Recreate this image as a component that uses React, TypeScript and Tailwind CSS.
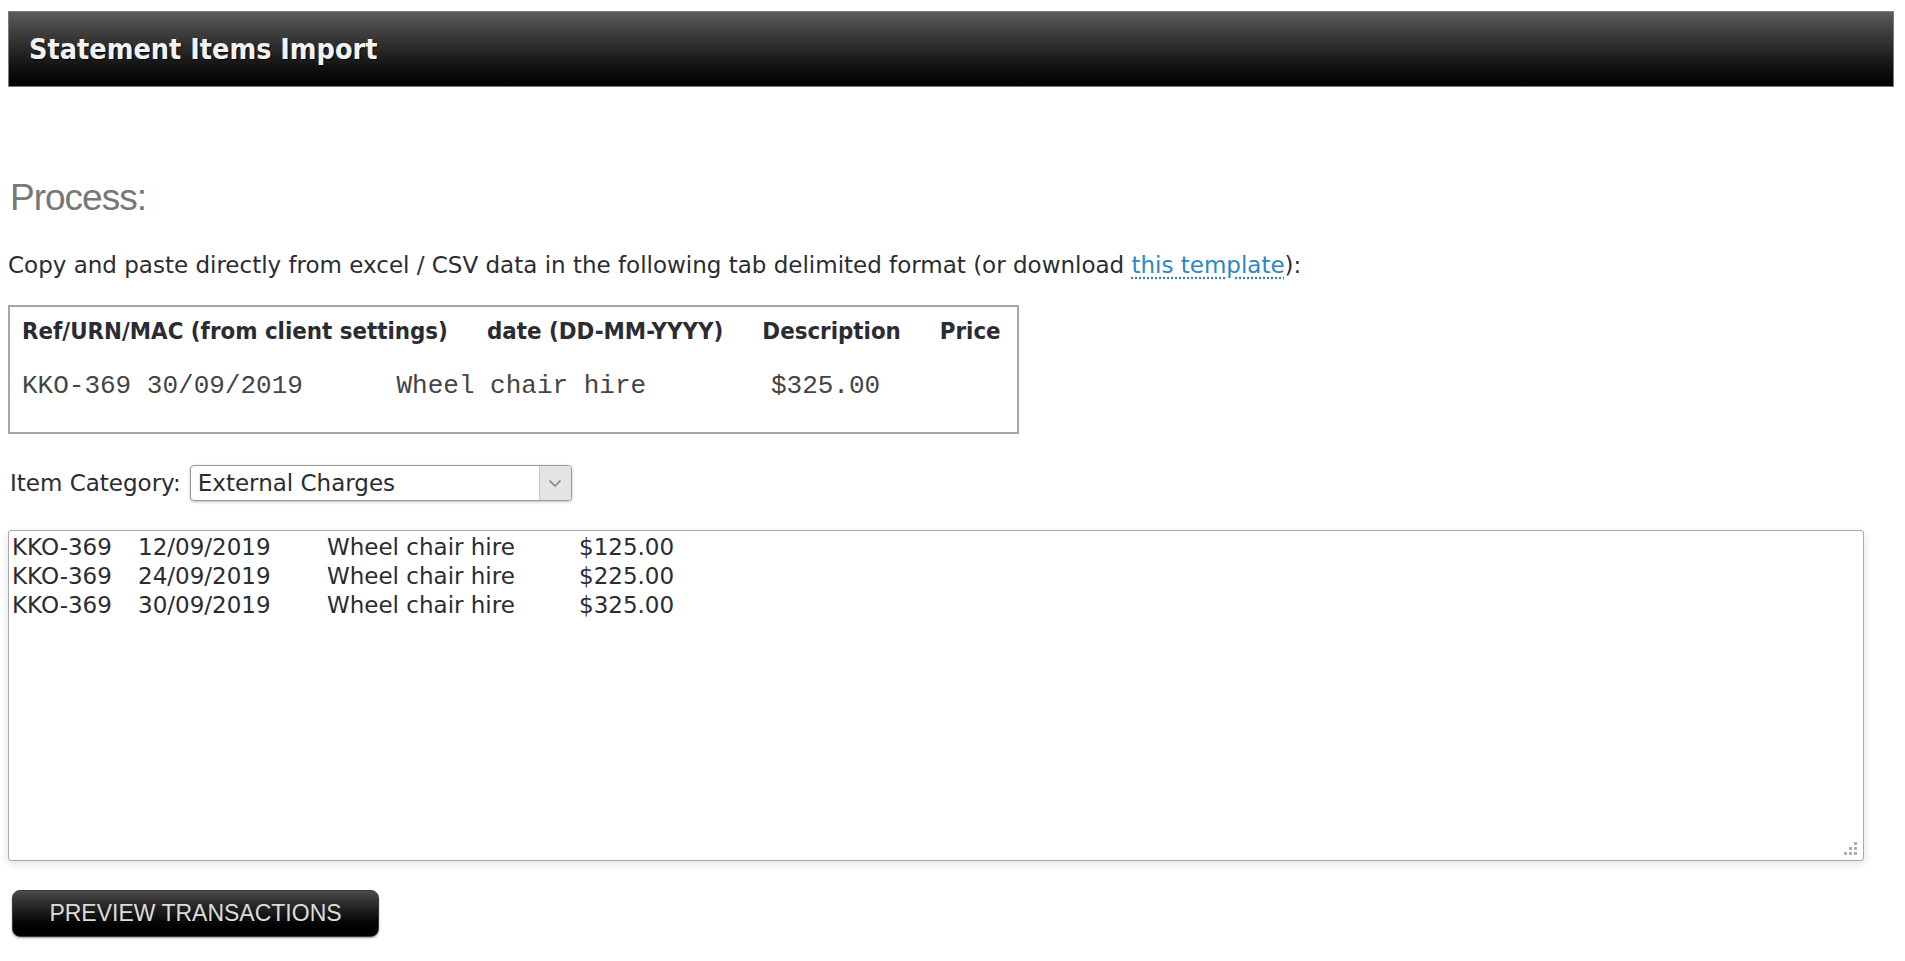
import React from "react";

const sans = "font-['DejaVu_Sans',Verdana,sans-serif]";
const bold = "font-['DejaVu_Sans_Condensed','DejaVu_Sans',sans-serif] font-stretch-condensed font-bold";

export default function App() {
  const rows = [
    "KKO-369\t12/09/2019\tWheel chair hire\t$125.00",
    "KKO-369\t24/09/2019\tWheel chair hire\t$225.00",
    "KKO-369\t30/09/2019\tWheel chair hire\t$325.00",
  ].join("\n");
  return (
    <div className={`min-h-[961px] bg-white pl-[8px] pr-[11px] ${sans} text-[#2b2b33]`}>
      <div className="mt-[11px] flex h-[76px] items-center border border-[#7a7a7a] bg-gradient-to-b from-[#5c5c5c] to-[#020202] pl-[20px] pt-[3px]">
        <span className={`${bold} text-[28.5px] text-[#f2f2f2] [text-shadow:1px_1px_1px_#000]`}>
          Statement Items Import
        </span>
      </div>

      <div className="mt-[91px] pl-[2px] font-['Liberation_Sans',Arial,sans-serif] text-[37px] leading-[40px] tracking-[-1px] text-[#777]">
        Process:
      </div>

      <div className="mt-[33px] text-[23px] leading-[28px]">
        Copy and paste directly from excel / CSV data in the following tab delimited format (or download{" "}
        <a className="text-[#2f86c4] underline decoration-dotted decoration-[#2f86c4] underline-offset-[4px]">
          this template
        </a>
        ):
      </div>

      <div className="mt-[26px] h-[129px] w-[1011px] border-2 border-[#a6a6a6] pl-[12px] pt-[10px]">
        <div className={`flex gap-[39px] text-[23.8px] leading-[28px] ${bold}`}>
          <span>Ref/URN/MAC (from client settings)</span>
          <span>date (DD-MM-YYYY)</span>
          <span>Description</span>
          <span>Price</span>
        </div>
        <pre className="mt-[27px] font-['Liberation_Mono','Courier_New',monospace] text-[26px] leading-[28px] text-[#444] [tab-size:8]">
          {"KKO-369 30/09/2019\tWheel chair hire\t$325.00"}
        </pre>
      </div>

      <div className="mt-[31px] flex items-center">
        <span className="pl-[2px] text-[23px] leading-[28px]">Item Category:</span>
        <div className="ml-[9px] flex h-[36px] w-[382px] overflow-hidden rounded-[4px] border border-[#9a9a9a] bg-white shadow-[0_1px_3px_rgba(0,0,0,0.25)]">
          <span className="flex-1 pl-[7px] text-[23px] leading-[34px]">External Charges</span>
          <span className="flex w-[32px] items-center justify-center border-l border-[#c8c8c8] bg-[#e4e4e4]">
            <svg width="14" height="9" viewBox="0 0 14 9" fill="none">
              <path d="M1.5 1.5 L7 7 L12.5 1.5" stroke="#777" strokeWidth="1.4" />
            </svg>
          </span>
        </div>
      </div>

      <div className="relative mt-[29px] w-[1856px]">
        <textarea
          className={`block h-[331px] w-full resize-none rounded-[3px] border border-[#a9a9a9] px-[3px] pt-[2px] text-[23px] leading-[29px] text-[#2b2b33] shadow-[0_3px_10px_rgba(0,0,0,0.12)] outline-none [tab-size:63px] ${sans}`}
          defaultValue={rows}
          spellCheck={false}
        />
        <svg className="absolute bottom-[5px] right-[6px]" width="16" height="16" viewBox="0 0 16 16">
          <g fill="#b0b0b0">
            <rect x="12" y="2" width="3" height="3" />
            <rect x="12" y="7" width="3" height="3" />
            <rect x="7" y="7" width="3" height="3" />
            <rect x="12" y="12" width="3" height="3" />
            <rect x="7" y="12" width="3" height="3" />
            <rect x="2" y="12" width="3" height="3" />
          </g>
        </svg>
      </div>

      <button className="ml-[4px] mt-[29px] flex h-[47px] w-[367px] items-center justify-center rounded-[8px] border border-[#3a3a3a] bg-gradient-to-b from-[#4a4a4a] to-[#000] font-['Liberation_Sans',Arial,sans-serif] text-[23px] text-[#dcdcdc] shadow-[0_1px_2px_rgba(0,0,0,0.4)]">
        PREVIEW TRANSACTIONS
      </button>
    </div>
  );
}
